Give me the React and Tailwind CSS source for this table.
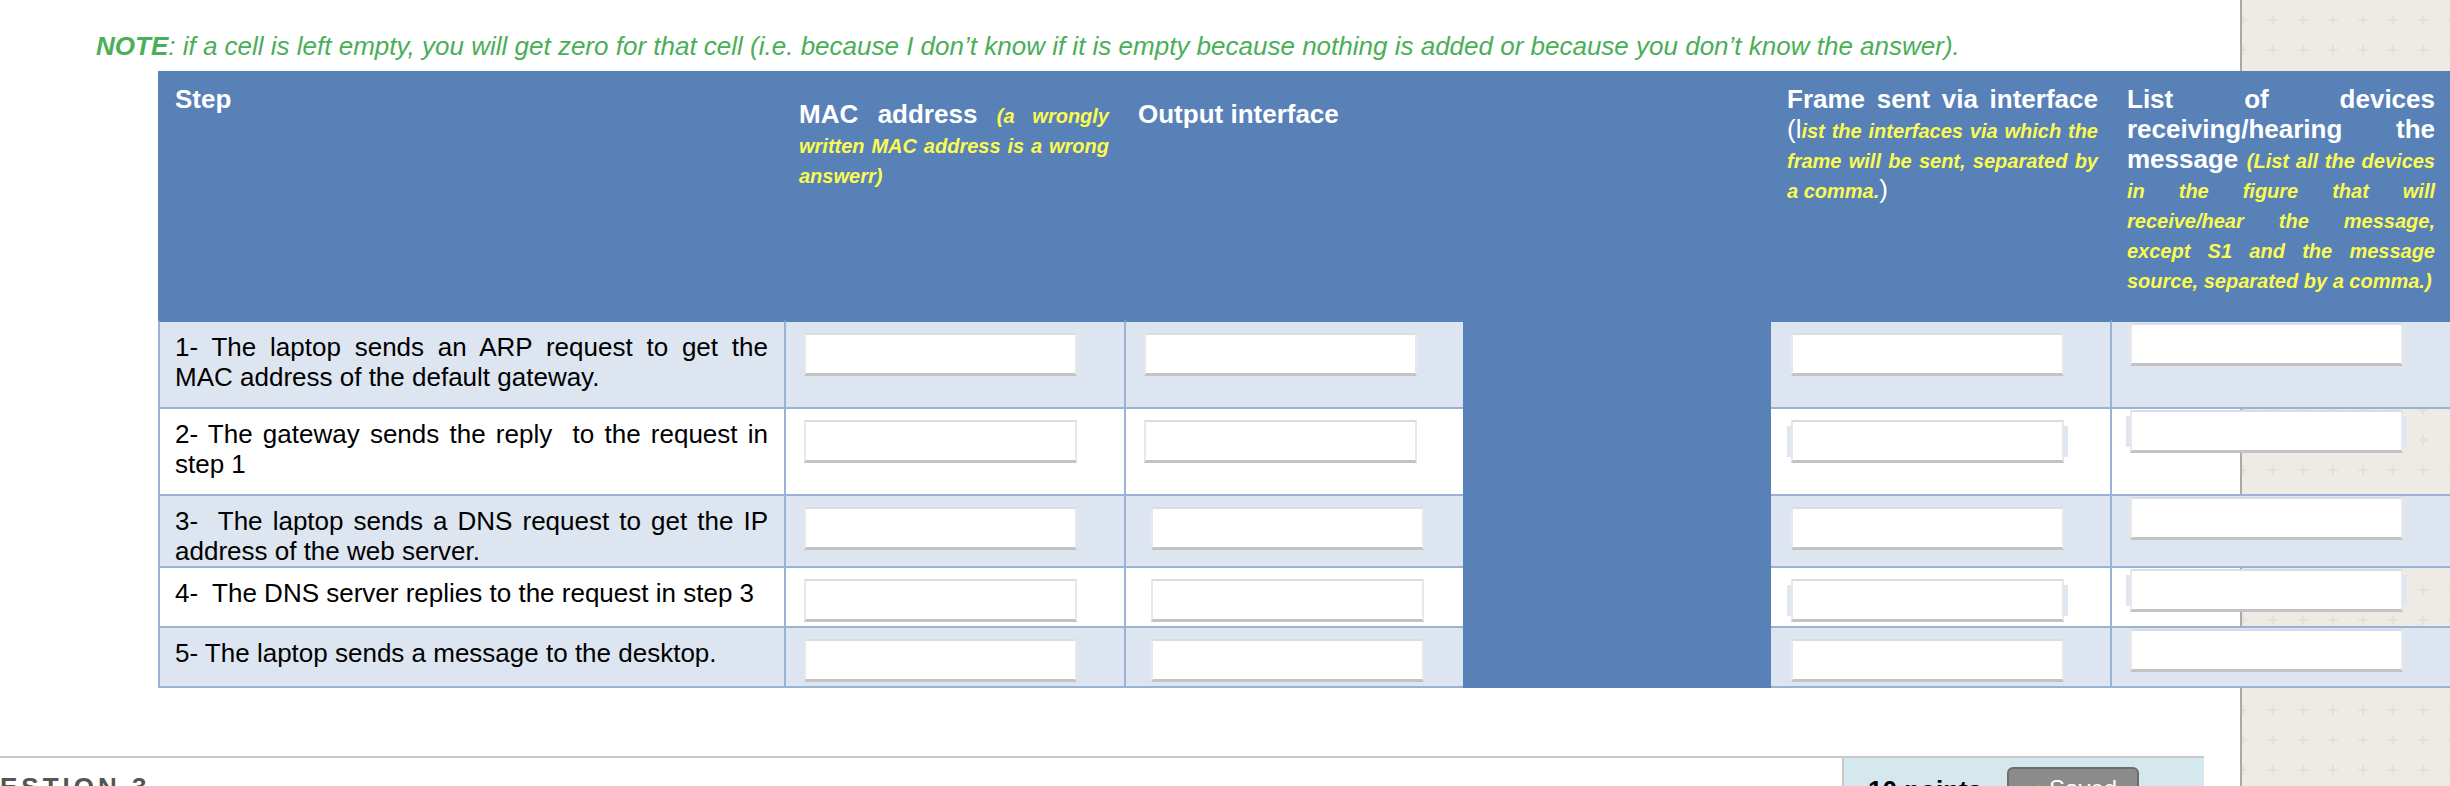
import React from 'react';

const yellow = 'font-bold italic text-[20px] leading-[22px] text-[#fbfb50]';

const rows = [
    {
        text: '1- The laptop sends an ARP request to get the MAC address of the default gateway.',
        height: 'h-[87px]',
        bg: 'bg-[#dde5f0]',
        top: 'border-t-[#5881b8]',
        outPad: 'pl-[18px]',
        tab: false,
    },
    {
        text: '2- The gateway sends the reply\u00a0 to the request in step 1',
        height: 'h-[87px]',
        bg: 'bg-transparent',
        top: 'border-t-[#9ab2d6]',
        outPad: 'pl-[18px]',
        tab: true,
    },
    {
        text: '3-\u00a0 The laptop sends a DNS request to get the IP address of the web server.',
        height: 'h-[72px]',
        bg: 'bg-[#dde5f0]',
        top: 'border-t-[#9ab2d6]',
        outPad: 'pl-[25px]',
        tab: false,
    },
    {
        text: '4-\u00a0 The DNS server replies to the request in step 3',
        height: 'h-[60px]',
        bg: 'bg-transparent',
        top: 'border-t-[#9ab2d6]',
        outPad: 'pl-[25px]',
        tab: true,
    },
    {
        text: '5- The laptop sends a message to the desktop.',
        height: 'h-[62px]',
        bg: 'bg-[#dde5f0]',
        top: 'border-t-[#9ab2d6]',
        outPad: 'pl-[25px]',
        tab: false,
        last: true,
    },
];

function Field({ tab }) {
    return (
        <div className="relative w-[273px] h-[43px]">
            {tab && <span className="absolute -left-[4px] -right-[4px] top-[6px] bottom-[6px] bg-[#dfe6f1]" />}
            <input
                type="text"
                readOnly
                className="relative block w-[273px] h-[43px] bg-white border-2 border-[#e8e8e8] border-t-[#d6dde7] border-b-[3px] border-b-[#c3c3c3] outline-none"
            />
        </div>
    );
}

function Pattern() {
    return (
        <svg className="absolute inset-0 w-full h-full" xmlns="http://www.w3.org/2000/svg">
            <defs>
                <pattern id="plus" width="30" height="30" patternUnits="userSpaceOnUse" patternTransform="translate(8 5)">
                    <path d="M15 8 L16.3 13.7 L22 15 L16.3 16.3 L15 22 L13.7 16.3 L8 15 L13.7 13.7 Z" fill="#e3e0d8" />
                </pattern>
            </defs>
            <rect width="100%" height="100%" fill="#eeebe4" />
            <rect width="100%" height="100%" fill="url(#plus)" />
        </svg>
    );
}

function App() {
    return (
        <div className="relative w-[2450px] h-[786px] overflow-hidden font-['Liberation_Sans',Arial,sans-serif] text-[26px] leading-[30px] text-black">
            <Pattern />
            <div className="relative w-[2242px] h-full bg-white border-r-2 border-[#a9a9a9]">
                <p className="pt-[31px] pl-[96px] italic text-[#4bae58] whitespace-nowrap">
                    <span className="font-bold">NOTE</span>: if a cell is left empty, you will get zero for that cell (i.e. because I don’t know if it is empty because nothing is added or because you don’t know the answer).
                </p>

                <div className="mt-[10px] ml-[158px] w-[2292px]">
                    <div className="grid grid-cols-[628px_340px_337px_308px_341px_1fr] h-[249px] bg-[#5881b8] text-white">
                        <div className="pt-[13px] pl-[17px] font-bold">Step</div>
                        <div className="pt-[28px] pl-[13px] pr-[17px] text-justify">
                            <span className="font-bold">MAC address</span>{' '}
                            <span className={yellow}>(a wrongly written MAC address is a wrong answerr)</span>
                        </div>
                        <div className="pt-[28px] pl-[12px] font-bold">Output interface</div>
                        <div />
                        <div className="pt-[13px] pl-[16px] pr-[14px] text-justify">
                            <span className="font-bold">Frame sent via interface</span>{' '}
                            <span>(l</span>
                            <span className={yellow}>ist the interfaces via which the frame will be sent, separated by a comma.</span>
                            <span>)</span>
                        </div>
                        <div className="pt-[13px] pl-[15px] pr-[15px] text-justify">
                            <span className="font-bold">List of devices receiving/hearing the message</span>{' '}
                            <span className={yellow}>(List all the devices in the figure that will receive/hear the message, except S1 and the message source, separated by a comma.)</span>
                        </div>
                    </div>

                    {rows.map((row, i) => (
                        <div key={i} className={`grid grid-cols-[628px_340px_337px_308px_341px_1fr] ${row.height}`}>
                            <div className={`${row.bg} border-2 border-[#9ab2d6] ${row.top} ${row.last ? '' : 'border-b-0'} pl-[15px] pr-[16px] pt-[10px] text-justify`}>
                                {row.text}
                            </div>
                            <div className={`${row.bg} border-t-2 border-r-2 border-[#9ab2d6] ${row.top} ${row.last ? 'border-b-2' : ''} pl-[18px] pt-[11px]`}>
                                <Field />
                            </div>
                            <div className={`${row.bg} border-t-2 border-[#9ab2d6] ${row.top} ${row.last ? 'border-b-2' : ''} ${row.outPad} pt-[11px]`}>
                                <Field />
                            </div>
                            <div className="bg-[#5881b8]" />
                            <div className={`${row.bg} border-t-2 border-r-2 border-[#9ab2d6] ${row.top} ${row.last ? 'border-b-2' : ''} pl-[20px] pt-[11px]`}>
                                <Field tab={row.tab} />
                            </div>
                            <div className={`${row.bg} border-t-2 border-[#9ab2d6] ${row.top} ${row.last ? 'border-b-2' : ''} pl-[18px] pt-[1px]`}>
                                <Field tab={row.tab} />
                            </div>
                        </div>
                    ))}
                </div>

                <div className="mt-[68px] w-[2204px] border-t-2 border-[#c9c9c9] flex justify-between">
                    <div className="pt-[14px] -ml-[47px] font-bold tracking-[4px] text-[#555555] whitespace-nowrap">QUESTION 3</div>
                    <div className="w-[362px] h-[80px] bg-[#d5e8ee] border-l-2 border-[#c9c9c9] flex items-start pl-[24px] pt-[9px] gap-[25px]">
                        <span className="mt-[8px] font-bold whitespace-nowrap">10 points</span>
                        <button className="flex items-center gap-[8px] h-[44px] w-[132px] px-[20px] rounded-[6px] bg-[#8b8b8b] border-2 border-[#6d6d6d] text-white text-[24px]">
                            <svg width="16" height="16" viewBox="0 0 16 16">
                                <path d="M2 9 L6 13 L14 3" fill="none" stroke="#7dc242" strokeWidth="2.5" />
                            </svg>
                            Saved
                        </button>
                    </div>
                </div>
            </div>
        </div>
    );
}

export default App;
